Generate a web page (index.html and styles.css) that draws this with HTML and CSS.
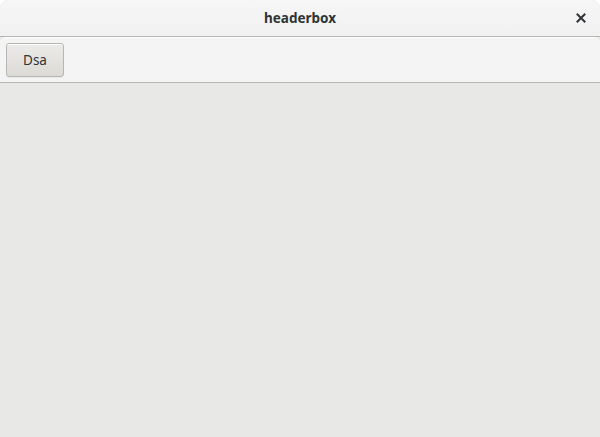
FILE: index.html
```html
<!DOCTYPE html>
<html>
<head>
<meta charset="utf-8">
<link rel="stylesheet" href="styles.css">
</head>
<body>
<div class="window">
  <header class="titlebar">
    <span class="title">headerbox</span>
    <button class="close" aria-label="Close">
      <svg width="10" height="10" viewBox="0 0 10 10"><path d="M1.5 1.5 L8.5 8.5 M8.5 1.5 L1.5 8.5" stroke="#2e3436" stroke-width="2" stroke-linecap="square"/></svg>
    </button>
  </header>
  <div class="toolbar">
    <button class="btn">Dsa</button>
  </div>
  <main class="content"></main>
</div>
</body>
</html>
```
FILE: styles.css
```css
html, body {
  margin: 0;
  padding: 0;
  background: #ffffff;
  width: 600px;
  height: 437px;
  overflow: hidden;
}
.window {
  width: 600px;
  height: 437px;
  display: flex;
  flex-direction: column;
  background: #e8e8e7;
  border-radius: 8px 8px 0 0;
  overflow: hidden;
  font-family: "Noto Sans", "Open Sans", sans-serif;
}
.titlebar {
  height: 37px;
  box-sizing: border-box;
  border-bottom: 1px solid #b6b6b3;
  background: linear-gradient(#f6f6f6, #f1f1f1);
  display: flex;
  align-items: center;
  justify-content: center;
  position: relative;
  flex: none;
}
.title {
  font-size: 13.5px;
  font-weight: bold;
  color: #2e3436;
  margin-top: -1px;
}
.close {
  position: absolute;
  right: 13px;
  top: 12px;
  width: 12px;
  height: 12px;
  padding: 0;
  border: 0;
  background: transparent;
  display: flex;
  align-items: center;
  justify-content: center;
}
.toolbar {
  height: 46px;
  box-sizing: border-box;
  background: #f4f4f4;
  border-top: 1px solid #ffffff;
  border-bottom: 1px solid #b6b6b3;
  border-radius: 6px 6px 0 0;
  padding: 5px 6px;
  display: flex;
  align-items: flex-start;
  flex: none;
  box-shadow: 0 1px 0 #f2f2f1;
}
.btn {
  width: 58px;
  height: 34px;
  box-sizing: border-box;
  border: 1px solid #b6b6b3;
  border-radius: 3px;
  background: linear-gradient(#edebe9, #dcdad5);
  box-shadow: inset 0 1px #ffffff, 0 1px rgba(0,0,0,0.04);
  font-family: "Noto Sans", "Open Sans", sans-serif;
  font-size: 13.5px;
  color: #2e3436;
  padding: 0;
  margin-top: 0;
}
.content {
  flex: 1;
  background: #e8e8e7;
}
```
